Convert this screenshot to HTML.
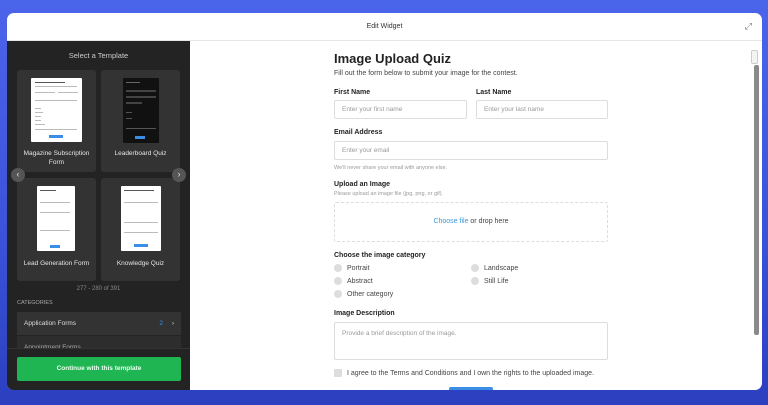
<!DOCTYPE html>
<html><head><meta charset="utf-8"><style>
*{box-sizing:border-box;margin:0;padding:0}
body{width:768px;height:405px;overflow:hidden;font-family:"Liberation Sans",sans-serif;background:linear-gradient(180deg,#4b64ea 0%,#3a52d8 60%,#2b3fbf 100%);position:relative}
.win{position:absolute;left:7px;top:13px;width:755px;height:377px;background:#fff;border-radius:7px;overflow:hidden}
.hdr{height:28px;border-bottom:1px solid #e6e6e6;text-align:center;font-size:7px;line-height:28px;color:#333}
.side{position:absolute;left:0;top:28px;width:183px;height:349px;background:#232323;color:#ddd}
.card{position:absolute;width:79px;height:102px;background:#333;border-radius:3px}
.card .lbl{position:absolute;top:80px;width:100%;text-align:center;font-size:6.5px;color:#e6e6e6;line-height:8.5px}
.th{position:absolute;border-radius:1px}
.ln{position:absolute;height:1px;background:#bbb}
.nav{position:absolute;width:14px;height:14px;border-radius:7px;background:#555;color:#ddd;font-size:9px;text-align:center;line-height:13px}
.main{position:absolute;left:327px;top:28px;width:276px;color:#222}
.lab{font-size:7px;font-weight:bold;color:#222}
.inp{border:1px solid #ddd;border-radius:2px;height:19px;font-size:6.5px;color:#999;padding-left:7px;line-height:18px}
.rad{display:inline-block;width:8px;height:8px;border-radius:4px;background:#ddd;vertical-align:middle;margin-right:5px}
.ro{position:absolute;font-size:7px;color:#444}
</style></head><body>
<div class="win">
<div class="hdr">Edit Widget</div>
<div style="position:absolute;right:10px;top:8px;font-size:9px;color:#777">⤢</div>
<div class="side">
 <div style="text-align:center;font-size:7.5px;color:#ccc;margin-top:10px">Select a Template</div>
 <div class="card" style="left:10px;top:29px">
  <div class="th" style="left:14px;top:8px;width:51px;height:64px;background:#fff">
   <div class="ln" style="left:4px;top:4px;width:30px;background:#555"></div>
   <div class="ln" style="left:4px;top:8px;width:42px"></div>
   <div class="ln" style="left:4px;top:14px;width:20px"></div><div class="ln" style="left:27px;top:14px;width:20px"></div>
   <div class="ln" style="left:4px;top:22px;width:42px"></div>
   <div class="ln" style="left:4px;top:30px;width:6px"></div><div class="ln" style="left:4px;top:34px;width:8px"></div><div class="ln" style="left:4px;top:38px;width:6px"></div><div class="ln" style="left:4px;top:42px;width:6px"></div><div class="ln" style="left:4px;top:46px;width:10px"></div>
   <div class="ln" style="left:4px;top:51px;width:42px"></div>
   <div style="position:absolute;left:18px;top:57px;width:14px;height:3px;background:#3a8ee6"></div>
  </div>
  <div class="lbl">Magazine Subscription<br>Form</div>
 </div>
 <div class="card" style="left:94px;top:29px">
  <div class="th" style="left:22px;top:8px;width:36px;height:65px;background:#111">
   <div class="ln" style="left:3px;top:4px;width:14px;background:#666"></div>
   <div class="ln" style="left:3px;top:12px;width:30px;height:2px;background:#444"></div>
   <div class="ln" style="left:3px;top:18px;width:30px;height:2px;background:#444"></div>
   <div class="ln" style="left:3px;top:24px;width:16px;height:2px;background:#444"></div>
   <div class="ln" style="left:3px;top:34px;width:6px;background:#555"></div><div class="ln" style="left:3px;top:40px;width:6px;background:#555"></div>
   <div class="ln" style="left:3px;top:50px;width:30px;background:#555"></div>
   <div style="position:absolute;left:12px;top:58px;width:10px;height:3px;background:#3a8ee6"></div>
  </div>
  <div class="lbl">Leaderboard Quiz</div>
 </div>
 <div class="card" style="left:10px;top:137px;height:103px">
  <div class="th" style="left:20px;top:8px;width:38px;height:65px;background:#fff">
   <div class="ln" style="left:3px;top:4px;width:16px;background:#555"></div>
   <div class="ln" style="left:3px;top:16px;width:30px"></div><div class="ln" style="left:3px;top:26px;width:30px"></div><div class="ln" style="left:3px;top:44px;width:30px"></div>
   <div style="position:absolute;left:13px;top:59px;width:10px;height:3px;background:#3a8ee6"></div>
  </div>
  <div class="lbl" style="top:82px">Lead Generation Form</div>
 </div>
 <div class="card" style="left:94px;top:137px;height:103px">
  <div class="th" style="left:20px;top:8px;width:40px;height:65px;background:#fff">
   <div class="ln" style="left:3px;top:4px;width:30px;background:#555"></div>
   <div class="ln" style="left:3px;top:16px;width:34px"></div><div class="ln" style="left:3px;top:36px;width:34px"></div><div class="ln" style="left:3px;top:46px;width:34px"></div>
   <div style="position:absolute;left:13px;top:58px;width:14px;height:3px;background:#3a8ee6"></div>
  </div>
  <div class="lbl" style="top:82px">Knowledge Quiz</div>
 </div>
 <div class="nav" style="left:4px;top:127px">‹</div>
 <div class="nav" style="left:165px;top:127px">›</div>
 <div style="position:absolute;top:245px;width:100%;text-align:center;font-size:6px;color:#888">277 - 280 of 391</div>
 <div style="position:absolute;top:259px;left:10px;font-size:5.5px;color:#aaa">CATEGORIES</div>
 <div style="position:absolute;top:271px;left:10px;width:164px;height:23px;background:#333;font-size:6.5px;color:#ddd;line-height:23px;padding-left:7px">Application Forms<span style="position:absolute;right:18px;color:#3a8ee6">2</span><span style="position:absolute;right:7px">›</span></div>
 <div style="position:absolute;top:295px;left:10px;width:164px;height:12px;background:#2d2d2d;overflow:hidden;font-size:6.5px;color:#aaa;line-height:23px;padding-left:7px">Appointment Forms</div>
 <div style="position:absolute;top:307px;left:0;width:183px;height:42px;background:#232323;border-top:1px solid #333"></div>
 <div style="position:absolute;top:316px;left:10px;width:164px;height:24px;background:#1fb552;border-radius:2px;color:#eafff0;font-size:6.5px;font-weight:bold;text-align:center;line-height:24px">Continue with this template</div>
</div>
<div class="main">
 <div style="position:absolute;top:10px;font-size:13px;font-weight:bold">Image Upload Quiz</div>
 <div style="position:absolute;top:29px;font-size:7px;color:#444">Fill out the form below to submit your image for the contest.</div>
 <div class="lab" style="position:absolute;top:48px">First Name</div>
 <div class="lab" style="position:absolute;top:48px;left:142px">Last Name</div>
 <div class="inp" style="position:absolute;top:59px;width:133px">Enter your first name</div>
 <div class="inp" style="position:absolute;top:59px;left:142px;width:132px">Enter your last name</div>
 <div class="lab" style="position:absolute;top:88px">Email Address</div>
 <div class="inp" style="position:absolute;top:100px;width:274px">Enter your email</div>
 <div style="position:absolute;top:124px;font-size:5.5px;color:#999">We'll never share your email with anyone else.</div>
 <div class="lab" style="position:absolute;top:140px">Upload an Image</div>
 <div style="position:absolute;top:150px;font-size:5.5px;color:#999">Please upload an image file (jpg, png, or gif).</div>
 <div style="position:absolute;top:161px;width:274px;height:40px;border:1px dashed #ddd;border-radius:2px;text-align:center;line-height:38px;font-size:7px;color:#444"><span style="color:#3a9ad9">Choose file</span> or drop here</div>
 <div class="lab" style="position:absolute;top:211px">Choose the image category</div>
 <div class="ro" style="top:223px"><span class="rad"></span>Portrait</div>
 <div class="ro" style="top:223px;left:137px"><span class="rad"></span>Landscape</div>
 <div class="ro" style="top:236px"><span class="rad"></span>Abstract</div>
 <div class="ro" style="top:236px;left:137px"><span class="rad"></span>Still Life</div>
 <div class="ro" style="top:249px"><span class="rad"></span>Other category</div>
 <div class="lab" style="position:absolute;top:269px">Image Description</div>
 <div style="position:absolute;top:281px;width:274px;height:38px;border:1px solid #ddd;border-radius:2px;font-size:6.5px;color:#999;padding:7px">Provide a brief description of the image.</div>
 <div class="ro" style="top:328px"><span style="display:inline-block;width:8px;height:8px;background:#ddd;border-radius:1px;vertical-align:middle;margin-right:5px"></span>I agree to the Terms and Conditions and I own the rights to the uploaded image.</div>
 <div style="position:absolute;top:346px;left:115px;width:44px;height:4px;background:#3a8ee6;border-radius:2px 2px 0 0"></div>
</div>
<div style="position:absolute;left:744px;top:37px;width:7px;height:14px;border:1px solid #ccc;border-radius:2px;background:#f4f4f4"></div>
<div style="position:absolute;left:747px;top:52px;width:5px;height:270px;background:#8a8a8a;border-radius:2px"></div>
</div>
</body></html>
